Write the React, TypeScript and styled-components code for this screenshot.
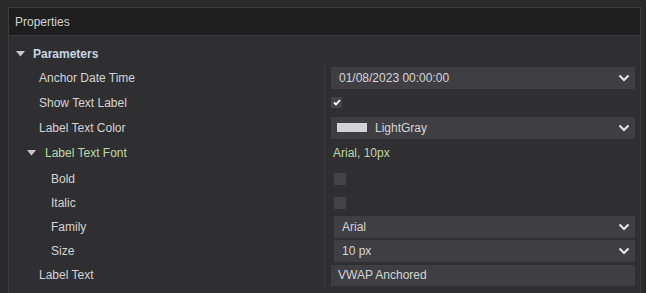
import React from "react";
import styled, { createGlobalStyle } from "styled-components";

const FONT = `"Liberation Sans", Arial, sans-serif`;

const GlobalStyle = createGlobalStyle`
  html, body {
    margin: 0;
    padding: 0;
    background: #2a2a2b;
    font-family: ${FONT};
    font-size: 12px;
    overflow: hidden;
  }
`;

const Panel = styled.div`
  margin: 7px 5px 0 8px;
  height: 290px;
  border: 1px solid #3c3c3e;
  background: #2f2f31;
  box-sizing: border-box;
`;

const Header = styled.div`
  height: 27px;
  padding-left: 6px;
  display: flex;
  align-items: center;
  background: #1e1e1f;
  border-bottom: 1px solid #3c3c3e;
  color: #d2d2d2;
`;

const Body = styled.div`
  padding-top: 6px;
`;

const Group = styled.div`
  height: 23px;
  display: flex;
  align-items: center;
  padding-left: 7px;
  gap: 8px;
  color: #c9d6e3;
  font-weight: bold;
`;

const Row = styled.div<{ $h: number }>`
  height: ${(p) => p.$h}px;
  display: grid;
  grid-template-columns: 315px 1fr;
`;

const Label = styled.div<{ $indent: number; $accent?: boolean }>`
  display: flex;
  align-items: center;
  gap: 9px;
  padding-left: ${(p) => p.$indent}px;
  color: ${(p) => (p.$accent ? "#bcd8a8" : "#d4d4d4")};
`;

const Value = styled.div<{ $inset: number }>`
  display: flex;
  align-items: center;
  border-left: 1px solid #3a3a3c;
  padding: 0 5px 0 ${(p) => p.$inset}px;
`;

const Select = styled.div`
  flex: 1;
  height: 22px;
  display: flex;
  align-items: center;
  padding: 0 5px 0 8px;
  background: #3e3e43;
  color: #d6d6d6;
`;

const SelectText = styled.span`
  flex: 1;
  display: flex;
  align-items: center;
  gap: 8px;
`;

const Swatch = styled.span`
  width: 30px;
  height: 9px;
  background: #d3d3d3;
  margin-left: -2px;
`;

const TextInput = styled.div`
  flex: 1;
  height: 21px;
  display: flex;
  align-items: center;
  padding-left: 7px;
  background: #3e3e43;
  color: #d6d6d6;
`;

const Check = styled.div<{ $size: number }>`
  width: ${(p) => p.$size}px;
  height: ${(p) => p.$size}px;
  background: #434348;
  display: flex;
  align-items: center;
  justify-content: center;
`;

const Summary = styled.span`
  padding-left: 2px;
  color: #bcd8a8;
`;

const Caret = () => (
  <svg width="9" height="6" viewBox="0 0 9 6">
    <path d="M0 0h9L4.5 5.5z" fill="#c8c8c8" />
  </svg>
);

const Chevron = () => (
  <svg width="12" height="8" viewBox="0 0 12 8">
    <path
      d="M1.5 1.5L6 6l4.5-4.5"
      fill="none"
      stroke="#e4e4e4"
      strokeWidth="2.2"
    />
  </svg>
);

const Tick = () => (
  <svg width="8" height="7" viewBox="0 0 8 7">
    <path d="M1 3.5l2 2L7 1" fill="none" stroke="#ffffff" strokeWidth="1.8" />
  </svg>
);

export default function App() {
  return (
    <>
      <GlobalStyle />
      <Panel>
        <Header>Properties</Header>
        <Body>
          <Group>
            <Caret />
            Parameters
          </Group>
          <Row $h={25}>
            <Label $indent={30}>Anchor Date Time</Label>
            <Value $inset={6}>
              <Select>
                <SelectText>01/08/2023 00:00:00</SelectText>
                <Chevron />
              </Select>
            </Value>
          </Row>
          <Row $h={25}>
            <Label $indent={30}>Show Text Label</Label>
            <Value $inset={6}>
              <Check $size={11}>
                <Tick />
              </Check>
            </Value>
          </Row>
          <Row $h={25}>
            <Label $indent={30}>Label Text Color</Label>
            <Value $inset={6}>
              <Select>
                <SelectText>
                  <Swatch />
                  LightGray
                </SelectText>
                <Chevron />
              </Select>
            </Value>
          </Row>
          <Row $h={26}>
            <Label $indent={18} $accent>
              <Caret />
              Label Text Font
            </Label>
            <Value $inset={6}>
              <Summary>Arial, 10px</Summary>
            </Value>
          </Row>
          <Row $h={25}>
            <Label $indent={42}>Bold</Label>
            <Value $inset={9}>
              <Check $size={12} />
            </Value>
          </Row>
          <Row $h={24}>
            <Label $indent={42}>Italic</Label>
            <Value $inset={9}>
              <Check $size={12} />
            </Value>
          </Row>
          <Row $h={24}>
            <Label $indent={42}>Family</Label>
            <Value $inset={9}>
              <Select>
                <SelectText>Arial</SelectText>
                <Chevron />
              </Select>
            </Value>
          </Row>
          <Row $h={24}>
            <Label $indent={42}>Size</Label>
            <Value $inset={9}>
              <Select>
                <SelectText>10 px</SelectText>
                <Chevron />
              </Select>
            </Value>
          </Row>
          <Row $h={24}>
            <Label $indent={30}>Label Text</Label>
            <Value $inset={6}>
              <TextInput>VWAP Anchored</TextInput>
            </Value>
          </Row>
        </Body>
      </Panel>
    </>
  );
}
